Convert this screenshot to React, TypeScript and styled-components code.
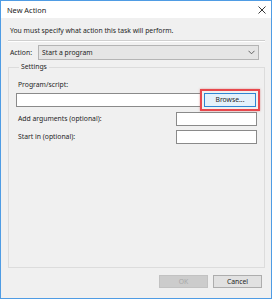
import styled, { createGlobalStyle } from 'styled-components';

const GlobalStyle = createGlobalStyle`
  html, body {
    margin: 0;
    padding: 0;
    background: #ffffff;
  }
  * {
    box-sizing: border-box;
  }
`;

export default function App() {
  return (
    <>
      <GlobalStyle />
      <Window>
        <TitleBar>
          <Title>New Action</Title>
          <CloseIcon viewBox="0 0 8 8">
            <path d="M0.5 0.5 L7.5 7.5 M7.5 0.5 L0.5 7.5" stroke="#222" strokeWidth="0.9" />
          </CloseIcon>
        </TitleBar>
        <Body>
          <Description>You must specify what action this task will perform.</Description>
          <Separator />
          <ActionRow>
            <Label>Action:</Label>
            <Select>
              <span>Start a program</span>
              <svg width="7" height="5" viewBox="0 0 7 5">
                <path d="M0.5 0.8 L3.5 3.8 L6.5 0.8" fill="none" stroke="#555" strokeWidth="0.9" />
              </svg>
            </Select>
          </ActionRow>
          <GroupBox>
            <Legend>Settings</Legend>
            <FieldLabel>Program/script:</FieldLabel>
            <ProgramRow>
              <TextBox $width={185} />
              <BrowseWrap>
                <BrowseButton>Browse...</BrowseButton>
                <Highlight />
              </BrowseWrap>
            </ProgramRow>
            <OptionRow $top={5}>
              <FieldLabel>Add arguments (optional):</FieldLabel>
              <TextBox $width={81} />
            </OptionRow>
            <OptionRow $top={4}>
              <FieldLabel>Start in (optional):</FieldLabel>
              <TextBox $width={81} />
            </OptionRow>
          </GroupBox>
          <Footer>
            <DialogButton disabled>OK</DialogButton>
            <DialogButton>Cancel</DialogButton>
          </Footer>
        </Body>
      </Window>
    </>
  );
}

const Window = styled.div`
  width: 272px;
  height: 299px;
  border: 1px solid #4f9ce4;
  background: #f0f0f0;
  display: flex;
  flex-direction: column;
  font-family: 'Noto Sans', 'Open Sans', sans-serif;
  font-size: 6.8px;
  color: #1e1e1e;
`;

const TitleBar = styled.div`
  height: 17px;
  background: #ffffff;
  display: flex;
  align-items: center;
  justify-content: space-between;
  padding: 0 5px 0 6px;
`;

const Title = styled.span`
  font-size: 7.4px;
  color: #222;
`;

const CloseIcon = styled.svg`
  width: 8px;
  height: 8px;
`;

const Body = styled.div`
  flex: 1;
  display: flex;
  flex-direction: column;
  padding: 0 6px 0 7px;
`;

const Description = styled.div`
  height: 22px;
  padding: 8px 0 0 2px;
  line-height: 10px;
`;

const Separator = styled.div`
  height: 2px;
  border-top: 1px solid #cfcfcf;
  border-bottom: 1px solid #ffffff;
`;

const ActionRow = styled.div`
  margin-top: 3px;
  display: flex;
  align-items: center;
  padding-left: 2px;
  padding-right: 6px;
`;

const Label = styled.span`
  width: 28px;
`;

const Select = styled.div`
  flex: 1;
  height: 15px;
  background: #e5e5e5;
  border: 1px solid #b4b4b4;
  display: flex;
  align-items: center;
  justify-content: space-between;
  padding: 0 3px 0 3px;
`;

const GroupBox = styled.fieldset`
  margin: 2px 0 0 0;
  padding: 8px 0 0 7px;
  height: 206px;
  border: 1px solid #dcdcdc;
  border-radius: 0;
  display: flex;
  flex-direction: column;
`;

const Legend = styled.legend`
  padding: 0 2px;
  margin-left: 3px;
  line-height: 10px;
`;

const FieldLabel = styled.span`
  padding-left: 2px;
  line-height: 10px;
`;

const ProgramRow = styled.div`
  margin-top: 3px;
  display: flex;
  gap: 3px;
`;

const TextBox = styled.div<{ $width: number }>`
  width: ${(p) => p.$width}px;
  height: 14px;
  background: #ffffff;
  border: 1px solid #8a8a8a;
`;

const BrowseWrap = styled.div`
  position: relative;
`;

const BrowseButton = styled.div`
  width: 52px;
  height: 14px;
  background: #e5f1fb;
  border: 1px solid #2f84d2;
  display: flex;
  align-items: center;
  justify-content: center;
  line-height: 10px;
`;

const Highlight = styled.div`
  position: absolute;
  left: -4px;
  top: -4px;
  width: 60px;
  height: 22px;
  border: 2px solid #e8474c;
  box-shadow: 0 0 2px rgba(200, 60, 60, 0.5);
`;

const OptionRow = styled.div<{ $top: number }>`
  margin-top: ${(p) => p.$top}px;
  width: 241px;
  display: flex;
  align-items: center;
  justify-content: space-between;
`;

const Footer = styled.div`
  display: flex;
  justify-content: flex-end;
  gap: 5px;
  padding: 7px 3px 0 0;
`;

const DialogButton = styled.button`
  width: 49px;
  height: 13px;
  padding: 0;
  font-family: inherit;
  font-size: 6.8px;
  line-height: 10px;
  color: #1e1e1e;
  background: #e1e1e1;
  border: 1px solid #adadad;
  border-radius: 0;

  &:disabled {
    color: #a8a8a8;
    background: #cccccc;
    border-color: #c2c2c2;
  }
`;
